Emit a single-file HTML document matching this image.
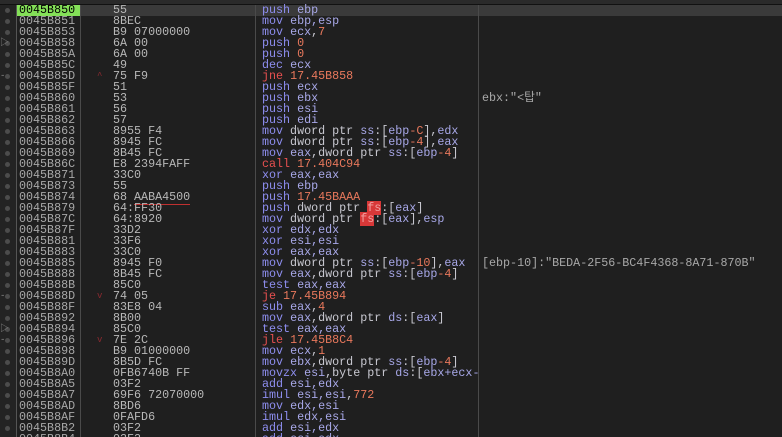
<!DOCTYPE html>
<html><head><meta charset="utf-8"><style>
html,body{margin:0;width:782px;height:437px;overflow:hidden;}
body{background:#1f1f1f;position:relative;font-family:"Liberation Mono","Noto Sans CJK KR",monospace;font-size:11.7px;}
.hdr{position:absolute;left:0;top:0;width:782px;height:4px;background:#2a2a2a;border-bottom:1px solid #111;}
.gut{position:absolute;left:0;top:5px;width:16px;height:432px;background:#232323;border-right:1px solid #555;}
.sep{position:absolute;top:5px;width:1px;height:432px;background:#4a4a4a;}
.r{position:absolute;left:0;width:782px;height:11px;line-height:11px;white-space:pre;}
.r > span{position:absolute;}
.r span span{position:static;}
.dot{position:absolute;left:5px;width:5px;height:5px;border-radius:50%;background:#4c4c4c;margin-top:3px;}
.mk{position:absolute;left:0;color:#888;font-size:9px;}
.a{left:19px;color:#a8a8a8;}
.b{left:113px;color:#b8b8b8;}
.i{left:262px;color:#c8c8d0;}
.c{left:482px;color:#a8a8a8;}
.j{left:97px;color:#8a2a30;font-size:9px;}
.m{color:#8e8ef0;}
.g{color:#a8a8e8;}
.n{color:#e8785c;}
.x{color:#e85050;}
.f{background:#d83838;color:#f0a0a0;}
.u{border-bottom:1px solid #c03030;}
</style></head><body>
<div class="hdr"></div>
<div class="gut"></div>
<div style="position:absolute;left:17px;top:5px;width:765px;height:11px;background:#3a3a3a"></div>
<div style="position:absolute;left:17px;top:5px;width:63px;height:11px;background:#84e058"></div>
<div class="sep" style="left:80px"></div>
<div class="sep" style="left:255px"></div>
<div class="sep" style="left:478px"></div>

<div class="r" style="top:5px"><i class="dot"></i><span class="a" style="color:#000">0045B850</span><span class="b">55</span><span class="i"><span class="m">push</span> <span class="g">ebp</span></span></div>
<div class="r" style="top:16px"><i class="dot"></i><span class="a">0045B851</span><span class="b">8BEC</span><span class="i"><span class="m">mov</span> <span class="g">ebp,esp</span></span></div>
<div class="r" style="top:27px"><i class="dot"></i><span class="a">0045B853</span><span class="b">B9 07000000</span><span class="i"><span class="m">mov</span> <span class="g">ecx</span>,<span class="n">7</span></span></div>
<div class="r" style="top:38px"><i class="dot"></i><span class="mk">▷</span><span class="a">0045B858</span><span class="b">6A 00</span><span class="i"><span class="m">push</span> <span class="n">0</span></span></div>
<div class="r" style="top:49px"><i class="dot"></i><span class="a">0045B85A</span><span class="b">6A 00</span><span class="i"><span class="m">push</span> <span class="n">0</span></span></div>
<div class="r" style="top:60px"><i class="dot"></i><span class="a">0045B85C</span><span class="b">49</span><span class="i"><span class="m">dec</span> <span class="g">ecx</span></span></div>
<div class="r" style="top:71px"><i class="dot"></i><span class="mk">-</span><span class="a">0045B85D</span><span class="j">^</span><span class="b">75 F9</span><span class="i"><span class="x">jne</span> <span class="n">17.45B858</span></span></div>
<div class="r" style="top:82px"><i class="dot"></i><span class="a">0045B85F</span><span class="b">51</span><span class="i"><span class="m">push</span> <span class="g">ecx</span></span></div>
<div class="r" style="top:93px"><i class="dot"></i><span class="a">0045B860</span><span class="b">53</span><span class="i"><span class="m">push</span> <span class="g">ebx</span></span><span class="c">ebx:"&lt;탑"</span></div>
<div class="r" style="top:104px"><i class="dot"></i><span class="a">0045B861</span><span class="b">56</span><span class="i"><span class="m">push</span> <span class="g">esi</span></span></div>
<div class="r" style="top:115px"><i class="dot"></i><span class="a">0045B862</span><span class="b">57</span><span class="i"><span class="m">push</span> <span class="g">edi</span></span></div>
<div class="r" style="top:126px"><i class="dot"></i><span class="a">0045B863</span><span class="b">8955 F4</span><span class="i"><span class="m">mov</span> dword ptr <span class="g">ss</span>:[<span class="g">ebp</span><span class="n">-C</span>],<span class="g">edx</span></span></div>
<div class="r" style="top:137px"><i class="dot"></i><span class="a">0045B866</span><span class="b">8945 FC</span><span class="i"><span class="m">mov</span> dword ptr <span class="g">ss</span>:[<span class="g">ebp</span><span class="n">-4</span>],<span class="g">eax</span></span></div>
<div class="r" style="top:148px"><i class="dot"></i><span class="a">0045B869</span><span class="b">8B45 FC</span><span class="i"><span class="m">mov</span> <span class="g">eax</span>,dword ptr <span class="g">ss</span>:[<span class="g">ebp</span><span class="n">-4</span>]</span></div>
<div class="r" style="top:159px"><i class="dot"></i><span class="a">0045B86C</span><span class="b">E8 2394FAFF</span><span class="i"><span class="x">call</span> <span class="n">17.404C94</span></span></div>
<div class="r" style="top:170px"><i class="dot"></i><span class="a">0045B871</span><span class="b">33C0</span><span class="i"><span class="m">xor</span> <span class="g">eax,eax</span></span></div>
<div class="r" style="top:181px"><i class="dot"></i><span class="a">0045B873</span><span class="b">55</span><span class="i"><span class="m">push</span> <span class="g">ebp</span></span></div>
<div class="r" style="top:192px"><i class="dot"></i><span class="a">0045B874</span><span class="b">68 <span class="u">AABA4500</span></span><span class="i"><span class="m">push</span> <span class="n">17.45BAAA</span></span></div>
<div class="r" style="top:203px"><i class="dot"></i><span class="a">0045B879</span><span class="b">64:FF30</span><span class="i"><span class="m">push</span> dword ptr <span class="f">fs</span>:[<span class="g">eax</span>]</span></div>
<div class="r" style="top:214px"><i class="dot"></i><span class="a">0045B87C</span><span class="b">64:8920</span><span class="i"><span class="m">mov</span> dword ptr <span class="f">fs</span>:[<span class="g">eax</span>],<span class="g">esp</span></span></div>
<div class="r" style="top:225px"><i class="dot"></i><span class="a">0045B87F</span><span class="b">33D2</span><span class="i"><span class="m">xor</span> <span class="g">edx,edx</span></span></div>
<div class="r" style="top:236px"><i class="dot"></i><span class="a">0045B881</span><span class="b">33F6</span><span class="i"><span class="m">xor</span> <span class="g">esi,esi</span></span></div>
<div class="r" style="top:247px"><i class="dot"></i><span class="a">0045B883</span><span class="b">33C0</span><span class="i"><span class="m">xor</span> <span class="g">eax,eax</span></span></div>
<div class="r" style="top:258px"><i class="dot"></i><span class="a">0045B885</span><span class="b">8945 F0</span><span class="i"><span class="m">mov</span> dword ptr <span class="g">ss</span>:[<span class="g">ebp</span><span class="n">-10</span>],<span class="g">eax</span></span><span class="c">[ebp-10]:"BEDA-2F56-BC4F4368-8A71-870B"</span></div>
<div class="r" style="top:269px"><i class="dot"></i><span class="a">0045B888</span><span class="b">8B45 FC</span><span class="i"><span class="m">mov</span> <span class="g">eax</span>,dword ptr <span class="g">ss</span>:[<span class="g">ebp</span><span class="n">-4</span>]</span></div>
<div class="r" style="top:280px"><i class="dot"></i><span class="a">0045B88B</span><span class="b">85C0</span><span class="i"><span class="m">test</span> <span class="g">eax,eax</span></span></div>
<div class="r" style="top:291px"><i class="dot"></i><span class="mk">-</span><span class="a">0045B88D</span><span class="j">v</span><span class="b">74 05</span><span class="i"><span class="x">je</span> <span class="n">17.45B894</span></span></div>
<div class="r" style="top:302px"><i class="dot"></i><span class="a">0045B88F</span><span class="b">83E8 04</span><span class="i"><span class="m">sub</span> <span class="g">eax</span>,<span class="n">4</span></span></div>
<div class="r" style="top:313px"><i class="dot"></i><span class="a">0045B892</span><span class="b">8B00</span><span class="i"><span class="m">mov</span> <span class="g">eax</span>,dword ptr <span class="g">ds</span>:[<span class="g">eax</span>]</span></div>
<div class="r" style="top:324px"><i class="dot"></i><span class="mk">▷</span><span class="a">0045B894</span><span class="b">85C0</span><span class="i"><span class="m">test</span> <span class="g">eax,eax</span></span></div>
<div class="r" style="top:335px"><i class="dot"></i><span class="mk">-</span><span class="a">0045B896</span><span class="j">v</span><span class="b">7E 2C</span><span class="i"><span class="x">jle</span> <span class="n">17.45B8C4</span></span></div>
<div class="r" style="top:346px"><i class="dot"></i><span class="a">0045B898</span><span class="b">B9 01000000</span><span class="i"><span class="m">mov</span> <span class="g">ecx</span>,<span class="n">1</span></span></div>
<div class="r" style="top:357px"><i class="dot"></i><span class="a">0045B89D</span><span class="b">8B5D FC</span><span class="i"><span class="m">mov</span> <span class="g">ebx</span>,dword ptr <span class="g">ss</span>:[<span class="g">ebp</span><span class="n">-4</span>]</span></div>
<div class="r" style="top:368px"><i class="dot"></i><span class="a">0045B8A0</span><span class="b">0FB6740B FF</span><span class="i"><span class="m">movzx</span> <span class="g">esi</span>,byte ptr <span class="g">ds</span>:[<span class="g">ebx+ecx-</span></span></div>
<div class="r" style="top:379px"><i class="dot"></i><span class="a">0045B8A5</span><span class="b">03F2</span><span class="i"><span class="m">add</span> <span class="g">esi,edx</span></span></div>
<div class="r" style="top:390px"><i class="dot"></i><span class="a">0045B8A7</span><span class="b">69F6 72070000</span><span class="i"><span class="m">imul</span> <span class="g">esi,esi</span>,<span class="n">772</span></span></div>
<div class="r" style="top:401px"><i class="dot"></i><span class="a">0045B8AD</span><span class="b">8BD6</span><span class="i"><span class="m">mov</span> <span class="g">edx,esi</span></span></div>
<div class="r" style="top:412px"><i class="dot"></i><span class="a">0045B8AF</span><span class="b">0FAFD6</span><span class="i"><span class="m">imul</span> <span class="g">edx,esi</span></span></div>
<div class="r" style="top:423px"><i class="dot"></i><span class="a">0045B8B2</span><span class="b">03F2</span><span class="i"><span class="m">add</span> <span class="g">esi,edx</span></span></div>
<div class="r" style="top:434px"><i class="dot"></i><span class="a">0045B8B4</span><span class="b">03F2</span><span class="i"><span class="m">add</span> <span class="g">esi,edx</span></span></div>
</body></html>
